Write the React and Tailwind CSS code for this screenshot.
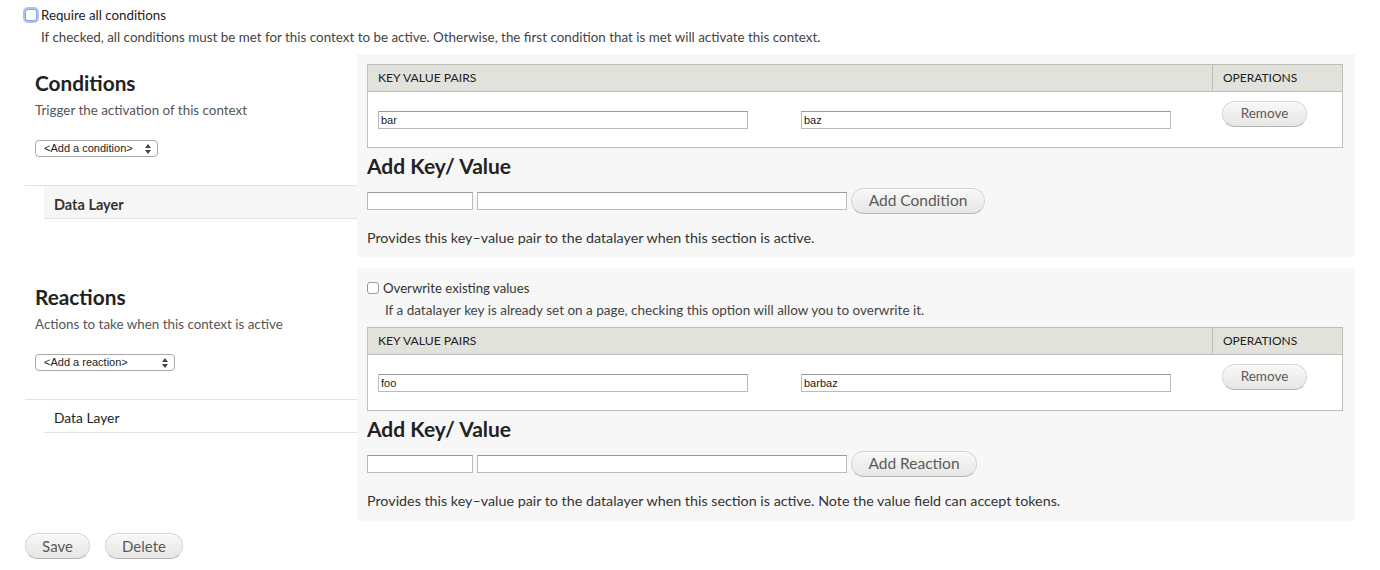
import React from "react";

const font = { fontFamily: "Lato, 'Open Sans', sans-serif" };
const arial = { fontFamily: "'Liberation Sans', Arial, sans-serif" };

function Btn({ children, className = "" }) {
  return (
    <button
      className={`rounded-full border border-[#d4d4d4] border-b-[#b4b4b4] bg-gradient-to-b from-[#f8f8f6] to-[#e6e6e4] text-[#5a5a5a] leading-none shadow-[0_1px_0_#fff_inset] ${className}`}
    >
      {children}
    </button>
  );
}

function Select({ label, width }) {
  return (
    <div
      className={`flex items-center justify-between h-[17px] rounded-[4px] border border-[#aaa] bg-white pl-[8px] pr-[6px] text-[11px] text-[#222] ${width}`}
      style={arial}
    >
      <span>{label}</span>
      <svg width="6" height="10" viewBox="0 0 6 10">
        <path d="M3 0L6 4H0Z M3 10L0 6H6Z" fill="#444" />
      </svg>
    </div>
  );
}

function KvTable({ k, v }) {
  return (
    <div className="border border-[#bebfb9]">
      <div className="flex h-[27px] bg-[#e1e2dc] border-b border-[#bebfb9] text-[12.2px] text-[#222] items-center">
        <div className="flex-1 pl-[10px]">KEY VALUE PAIRS</div>
        <div className="w-[130px] h-full border-l border-[#bebfb9] flex items-center pl-[10px] text-[12px]">OPERATIONS</div>
      </div>
      <div className="flex h-[55px] bg-white items-center">
        <div className="flex-1 flex pl-[10px] gap-[53px]">
          <input
            readOnly
            value={k}
            className="w-[370px] h-[18px] border border-[#bbb] border-t-[#999] px-[2px] text-[11px] text-[#222] outline-none"
            style={arial}
          />
          <input
            readOnly
            value={v}
            className="w-[370px] h-[18px] border border-[#bbb] border-t-[#999] px-[2px] text-[11px] text-[#222] outline-none"
            style={arial}
          />
        </div>
        <div className="w-[130px] pl-[10px] self-start pt-[8px]">
          <Btn className="w-[85px] h-[26px] text-[13.5px]">Remove</Btn>
        </div>
      </div>
    </div>
  );
}

function AddKv({ label, btnW, desc }) {
  return (
    <div>
      <h3 className="mt-[6px] text-[21px] font-bold text-[#222] leading-[24px]">Add Key/ Value</h3>
      <div className="flex items-center gap-[4px] mt-[10px]">
        <input className="w-[106px] h-[18px] border border-[#bbb] border-t-[#999] bg-white outline-none" />
        <input className="w-[370px] h-[18px] border border-[#bbb] border-t-[#999] bg-white outline-none" />
        <Btn className={`h-[26px] text-[15.5px] ${btnW}`}>{label}</Btn>
      </div>
      <p className="mt-[15px] text-[14.3px] leading-[18px] text-[#333]">{desc}</p>
    </div>
  );
}

export default function App() {
  return (
    <div className="bg-white min-h-[570px] w-[1380px] text-[#333]" style={font}>
      <div className="pl-[25px] pt-[6px]">
        <label className="flex items-center gap-[4px] text-[13.3px] leading-[18px] text-[#222]">
          <span className="w-[12px] h-[12px] rounded-[3px] border border-[#8aa6d4] bg-white shadow-[0_0_0_2px_#a9c4ef]" />
          Require all conditions
        </label>
        <p className="pl-[16px] mt-[4px] text-[13.4px] leading-[18px] text-[#444]">
          If checked, all conditions must be met for this context to be active. Otherwise, the first condition that is met will activate this context.
        </p>
      </div>

      <div className="flex mt-[8px] pl-[25px]">
        <div className="w-[332px]">
          <div className="pl-[10px] pt-[16px]">
            <h2 className="text-[20.8px] font-bold text-[#222] leading-[26px]">Conditions</h2>
            <p className="mt-[5px] text-[13.4px] leading-[18px] text-[#555]">Trigger the activation of this context</p>
            <div className="mt-[21px]">
              <Select label="<Add a condition>" width="w-[123px]" />
            </div>
          </div>
          <div className="mt-[28px] border-t border-[#e2e2e2]">
            <div className="ml-[19px] h-[33px] bg-[#f6f6f6] border-b border-[#e2e2e2] flex items-center pl-[10px] pt-[5px] text-[14.5px] font-bold text-[#333]">
              Data Layer
            </div>
          </div>
        </div>
        <div className="w-[998px] bg-[#f7f7f7] pl-[10px] pr-[12px] pt-[10px] h-[203px]">
          <KvTable k="bar" v="baz" />
          <AddKv label="Add Condition" btnW="w-[134px]" desc="Provides this key–value pair to the datalayer when this section is active." />
        </div>
      </div>

      <div className="flex mt-[11px] pl-[25px]">
        <div className="w-[332px]">
          <div className="pl-[10px] pt-[16px]">
            <h2 className="text-[20.8px] font-bold text-[#222] leading-[26px]">Reactions</h2>
            <p className="mt-[5px] text-[13.4px] leading-[18px] text-[#555]">Actions to take when this context is active</p>
            <div className="mt-[21px]">
              <Select label="<Add a reaction>" width="w-[140px]" />
            </div>
          </div>
          <div className="mt-[28px] border-t border-[#e2e2e2]">
            <div className="ml-[19px] h-[33px] border-b border-[#e2e2e2] flex items-center pl-[10px] pt-[4px] text-[13.8px] text-[#222]">
              Data Layer
            </div>
          </div>
        </div>
        <div className="w-[998px] bg-[#f7f7f7] pl-[10px] pr-[12px] pt-[11px] h-[253px]">
          <label className="flex items-center gap-[4px] text-[13.2px] leading-[18px] text-[#333]">
            <span className="w-[12px] h-[12px] rounded-[3px] border border-[#999] bg-white" />
            Overwrite existing values
          </label>
          <p className="pl-[18px] mt-[4px] text-[13.5px] leading-[18px] text-[#444]">
            If a datalayer key is already set on a page, checking this option will allow you to overwrite it.
          </p>
          <div className="mt-[8px]">
            <KvTable k="foo" v="barbaz" />
          </div>
          <AddKv label="Add Reaction" btnW="w-[126px]" desc="Provides this key–value pair to the datalayer when this section is active. Note the value field can accept tokens." />
        </div>
      </div>

      <div className="flex gap-[15px] pl-[25px] mt-[12px]">
        <Btn className="w-[65px] h-[26px] text-[15px]">Save</Btn>
        <Btn className="w-[78px] h-[26px] text-[15px]">Delete</Btn>
      </div>
    </div>
  );
}
